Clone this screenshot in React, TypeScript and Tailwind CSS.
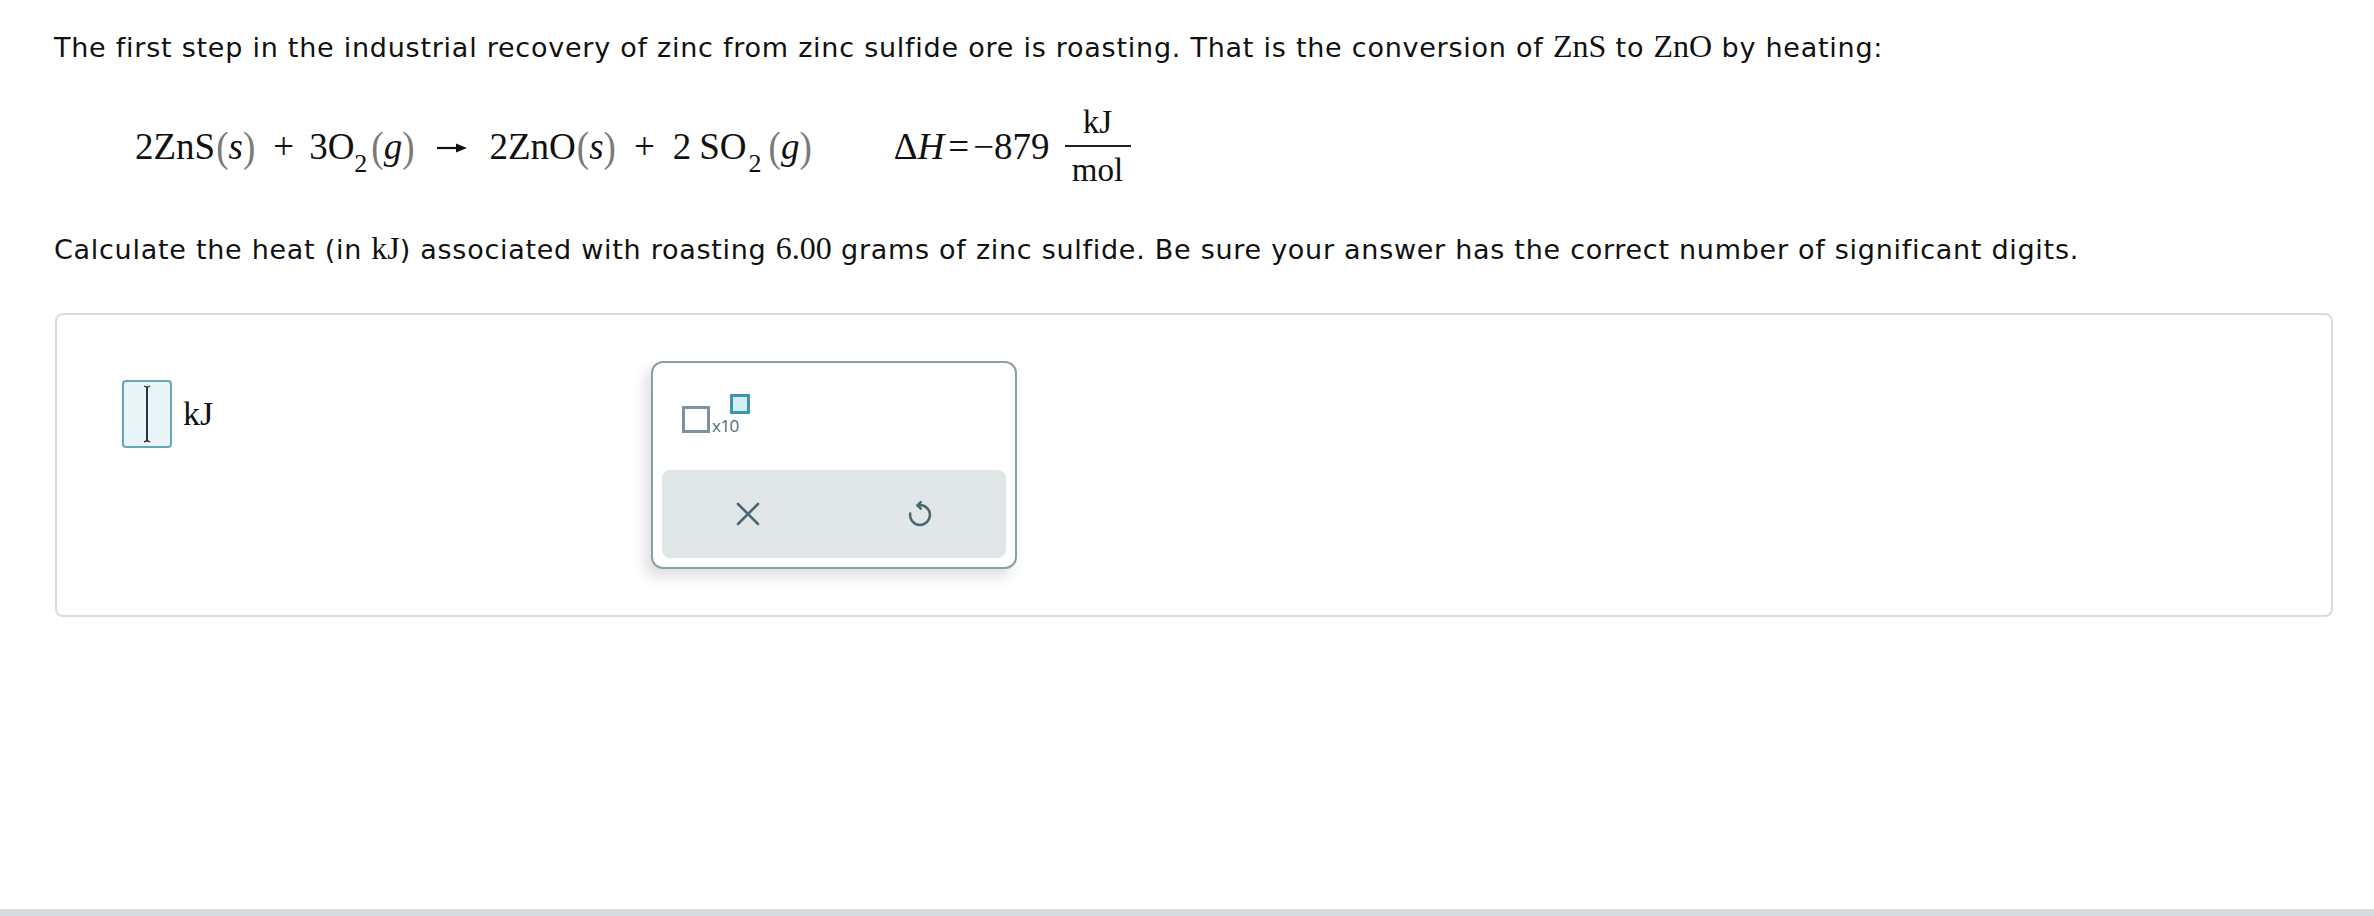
import React from 'react';

const serif = "font-['Liberation_Serif','Times_New_Roman',serif]";

const Paren: React.FC<{ children: React.ReactNode; className?: string }> = ({ children, className }) => (
    <span className={`flex items-center leading-none ${className ?? ''}`}>
        <span className="text-[#7a7a7a] scale-y-115">(</span>
        <span className="italic">{children}</span>
        <span className="text-[#7a7a7a] scale-y-115">)</span>
    </span>
);

const Sub: React.FC<{ className?: string }> = ({ className }) => (
    <span className={`text-[26px] leading-none translate-y-[18px] ${className ?? ''}`}>2</span>
);

const Arrow: React.FC = () => (
    <svg width="32" height="12" viewBox="0 0 32 12" className="ml-[21px] translate-y-[2px]">
        <line x1="1" y1="6" x2="22" y2="6" stroke="#111" strokeWidth="2.2" />
        <polygon points="20,1.5 31,6 20,10.5" fill="#111" />
    </svg>
);

const Equation: React.FC = () => (
    <div className={`${serif} flex items-center h-[80px] ml-[81px] text-[37px] leading-none text-[#111]`}>
        <span>2ZnS</span>
        <Paren className="ml-[1px]">s</Paren>
        <span className="ml-[18px]">+</span>
        <span className="ml-[15px]">3O</span>
        <Sub />
        <Paren className="ml-[4px]">g</Paren>
        <Arrow />
        <span className="ml-[22px]">2ZnO</span>
        <Paren className="ml-[1px]">s</Paren>
        <span className="ml-[18px]">+</span>
        <span className="ml-[18px]">2</span>
        <span className="ml-[8px]">SO</span>
        <Sub className="ml-[2px]" />
        <Paren className="ml-[7px]">g</Paren>
        <span className="ml-[82px]">Δ<span className="italic">H</span></span>
        <span className="ml-[4px]">=</span>
        <span className="ml-[4px]">−879</span>
        <div className="ml-[15px] flex flex-col items-center w-[66px] text-[33px]">
            <span className="leading-[34px]">kJ</span>
            <span className="block w-full h-[2px] bg-[#222] my-[6px]" />
            <span className="leading-[34px]">mol</span>
        </div>
    </div>
);

const Cursor: React.FC = () => (
    <svg width="12" height="60" viewBox="0 0 12 60">
        <path d="M3 2 Q6 4 9 2" stroke="#333" strokeWidth="1.5" fill="none" />
        <line x1="6" y1="3" x2="6" y2="57" stroke="#333" strokeWidth="2" />
        <path d="M3 58 Q6 56 9 58" stroke="#333" strokeWidth="1.5" fill="none" />
    </svg>
);

const XIcon: React.FC = () => (
    <svg width="26" height="26" viewBox="0 0 26 26">
        <path d="M3 3 L23 23 M23 3 L3 23" stroke="#4a6873" strokeWidth="2.6" strokeLinecap="round" />
    </svg>
);

const UndoIcon: React.FC = () => (
    <svg width="28" height="28" viewBox="0 0 24 24" fill="none" stroke="#4a6873" strokeWidth="2.2" strokeLinecap="round" strokeLinejoin="round">
        <path d="M10 4.6 A8.5 8.5 0 1 1 3.6 11.6" />
        <path d="M12.6 1.8 L9.8 4.6 L12.6 7.3" />
    </svg>
);

const Palette: React.FC = () => (
    <div className="w-[366px] h-[208px] flex flex-col border-2 border-[#8a9fa7] rounded-[12px] bg-white shadow-[-6px_8px_14px_rgba(0,0,0,0.13)]">
        <div className="h-[107px] flex items-start pt-[31px] pl-[29px]">
            <span className="mt-[12px] w-[28px] h-[27px] border-[3px] border-[#7b939c]" />
            <span className="ml-[2px] mt-[22px] text-[17px] leading-[20px] tracking-[-0.5px] text-[#4f6a74] font-['Open_Sans',sans-serif]">x10</span>
            <span className="ml-[-9px] w-[20px] h-[20px] border-[3px] border-[#3e93ad] bg-[#d4eef5]" />
        </div>
        <div className="mx-[9px] mb-[9px] h-[88px] grid grid-cols-2 items-center rounded-[8px] bg-[#e1e6e8]">
            <div className="flex justify-center"><XIcon /></div>
            <div className="flex justify-center"><UndoIcon /></div>
        </div>
    </div>
);

export default function App() {
    return (
        <div className="w-full h-[916px] flex flex-col bg-white text-[#111] font-['DejaVu_Sans','Verdana',sans-serif]">
            <div className="pl-[54px] pr-[41px]">
                <p className="mt-[30px] text-[27px] leading-[36px] tracking-[0.75px]">
                    The first step in the industrial recovery of zinc from zinc sulfide ore is roasting. That is the conversion of{' '}
                    <span className={`${serif} text-[32px] leading-none tracking-normal`}>ZnS</span> to{' '}
                    <span className={`${serif} text-[32px] leading-none tracking-normal`}>ZnO</span> by heating:
                </p>
                <div className="mt-[40px]">
                    <Equation />
                </div>
                <p className="mt-[46px] text-[27px] leading-[36px] tracking-[0.72px]">
                    Calculate the heat (in <span className={`${serif} text-[32px] leading-none tracking-normal`}>kJ</span>) associated with roasting{' '}
                    <span className={`${serif} text-[32px] leading-none tracking-normal`}>6.00</span> grams of zinc sulfide. Be sure your answer has the correct number of significant digits.
                </p>
                <div className="mt-[45px] ml-[1px] h-[304px] border-2 border-[#d5dde1] rounded-[8px] flex items-start pt-[46px] pl-[65px]">
                    <div className="w-[529px] mt-[19px] flex items-center">
                        <div className="w-[50px] h-[68px] flex items-center justify-center border-2 border-[#67a6b6] rounded-[4px] bg-[#e8f4f8]">
                            <Cursor />
                        </div>
                        <span className={`${serif} ml-[11px] text-[34px] leading-none`}>kJ</span>
                    </div>
                    <Palette />
                </div>
            </div>
            <div className="flex-1" />
            <div className="h-[7px] bg-[#d5dcdf]" />
        </div>
    );
}
